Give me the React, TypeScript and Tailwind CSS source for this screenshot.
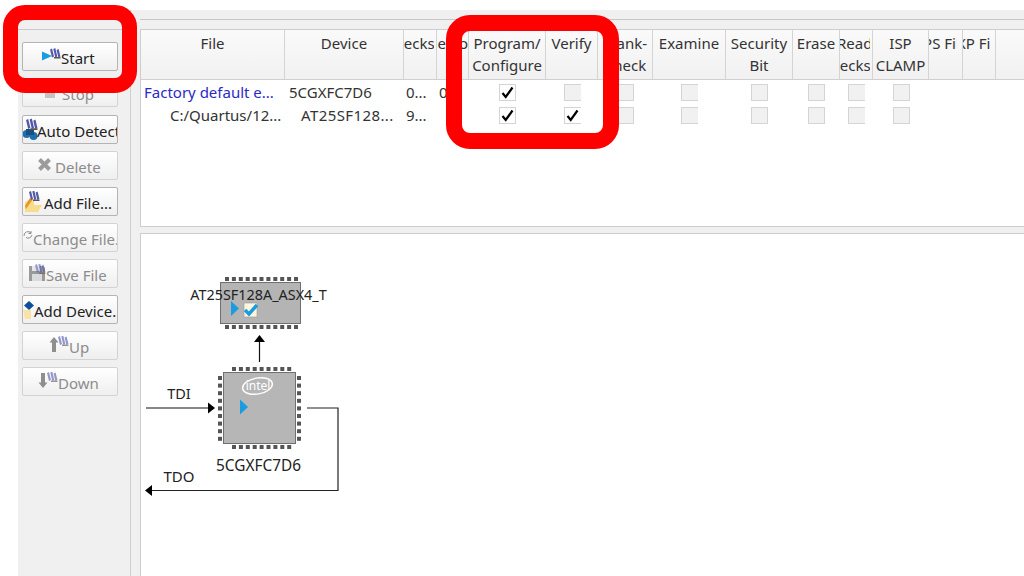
import React from "react";

const Gr = ({ o = 1 }: { o?: number }) => (
  <g opacity={o}>
    <path d="M0 1l2-1 2 8-2 1zM3.300 0.500l2-1 2 8.500-2 1zM6.600 1.500l2-1 1.800 7.500-2 1z" fill="#5458a8" />
    <path d="M4 8.500h6.500v1.500H4z" fill="#555" />
  </g>
);

function Icon({ kind }: { kind: string }) {
  if (kind === "start")
    return (
      <svg width="19" height="18" viewBox="0 0 19 18" className="shrink-0">
        <path d="M0 3.500l10 4.500-10 4.500z" fill="#1c9ce0" />
        <g transform="translate(8 0.500)"><Gr /></g>
      </svg>
    );
  if (kind === "stop")
    return (
      <svg width="18" height="18" viewBox="0 0 18 18" className="shrink-0">
        <path d="M1 6h10v8H1z" fill="#c4c4c4" />
      </svg>
    );
  if (kind === "auto")
    return (
      <svg width="14" height="24" viewBox="0 0 14 24" className="shrink-0 overflow-visible">
        <circle cx="3.500" cy="16" r="4" fill="#1c6fb0" />
        <circle cx="10.500" cy="18" r="4" fill="#1c6fb0" />
        <path d="M3 11h8v6H3z" fill="#1c4f80" />
        <g transform="translate(3 1) scale(1.100)"><Gr /></g>
      </svg>
    );
  if (kind === "delete")
    return (
      <svg width="18" height="16" viewBox="0 0 18 16" className="shrink-0 -mt-[2px]">
        <path d="M2.500 2.500l10 10M12.500 2.500l-10 10" stroke="#9c9c9c" strokeWidth="4" />
      </svg>
    );
  if (kind === "add")
    return (
      <svg width="19" height="22" viewBox="0 0 19 22" className="shrink-0">
        <path d="M0 21V11l6-3 3 2v4h8l-4 7z" fill="#f7dc8c" />
        <path d="M0 15l5-8 3 1-7 10z" fill="#e8952a" />
        <g transform="translate(4 0)"><Gr /></g>
      </svg>
    );
  if (kind === "change")
    return (
      <svg width="10" height="10" viewBox="0 0 10 10" className="shrink-0 -mt-[6px] overflow-visible">
        <path d="M1 6a4 4 0 0 1 7-3M8 1v2.500H5.500M9 5a4 4 0 0 1-6 2.500" stroke="#8a8a8a" fill="none" strokeWidth="1" />
      </svg>
    );
  if (kind === "save")
    return (
      <svg width="17" height="18" viewBox="0 0 17 18" className="shrink-0 -mt-[2px]">
        <path d="M0 2h14l2 2v13H0z" fill="#9a9a9a" />
        <path d="M3 2h8v5H3z" fill="#e6e6e6" />
        <path d="M3 10h10v7H3z" fill="#dadada" />
        <g transform="translate(6 0)"><Gr o={0.55} /></g>
      </svg>
    );
  if (kind === "device")
    return (
      <svg width="11" height="22" viewBox="0 0 11 22" className="shrink-0 overflow-visible">
        <path d="M6 2l5 4.500-5 4.500-5-4.500z" fill="#0f4f9a" />
        <path d="M0 11h8v9H2z" fill="#f8e2a4" />
      </svg>
    );
  if (kind === "up" || kind === "down")
    return (
      <svg width="20" height="18" viewBox="0 0 20 18" className="shrink-0 -mt-[2px]">
        <path d={kind === "up" ? "M5 1l4.500 5.500H7V16H3V6.500H0.500z" : "M3 1h4v9.500h2.500L5 16 0.500 10.500H3z"} fill="#8f8f8f" />
        <g transform="translate(9 0)"><Gr o={0.6} /></g>
      </svg>
    );
  return null;
}

const buttons = [
  { t: "Start", i: "start", on: true, c: "pl-[19px]" },
  { t: "Stop", i: "stop", c: "pl-[21px] mb-[1px]" },
  { t: "Auto Detect", i: "auto", on: true, c: "pl-0" },
  { t: "Delete", i: "delete", c: "pl-[14px]" },
  { t: "Add File...", i: "add", on: true, c: "pl-[2px]" },
  { t: "Change File...", i: "change", c: "pl-0" },
  { t: "Save File", i: "save", c: "pl-[6px]" },
  { t: "Add Device...", i: "device", on: true, c: "pl-0" },
  { t: "Up", i: "up", c: "pl-[26px]" },
  { t: "Down", i: "down", c: "pl-[15px]" },
];

const cols: { w: string; a: string; b?: string; ca?: string; cb?: string; inner?: string }[] = [
  { w: "w-[144px]", a: "File" },
  { w: "w-[119px]", a: "Device" },
  { w: "w-[33px]", a: "Checksum", ca: "ml-[-19px]", inner: "w-[30px] items-start" },
  { w: "w-[32px]", a: "Usercode" },
  { w: "w-[77px]", a: "Program/", b: "Configure" },
  { w: "w-[52px]", a: "Verify" },
  { w: "w-[55px]", a: "Blank-", b: "Check" },
  { w: "w-[73px]", a: "Examine" },
  { w: "w-[67px]", a: "Security", b: "Bit" },
  { w: "w-[47px]", a: "Erase" },
  { w: "w-[33px]", a: "Read", b: "Checksum", ca: "ml-[-3px]", cb: "ml-[-19px]", inner: "w-[30px] items-start" },
  { w: "w-[56px]", a: "ISP", b: "CLAMP" },
  { w: "w-[34px]", a: "IPS File", ca: "ml-[-11px]", inner: "w-[28px] items-start" },
  { w: "w-[33px]", a: "XP File", ca: "ml-[-6px]", inner: "w-[28px] items-start" },
];

function Check({ on, w, cut }: { on?: boolean; w: string; cut?: boolean }) {
  return (
    <div className={`${w} shrink-0 flex justify-center`}>
      <div
        className={`mt-[2px] w-[17px] h-[17px] border border-[#d4d4d4] flex items-center justify-center ${
          on ? "bg-white" : "bg-[#f1f1f1]"
        } ${cut ? "border-r-0" : ""}`}
      >
        {on && (
          <svg width="13" height="13" viewBox="0 0 13 13">
            <path d="M1.500 7l3.200 4L11.500 1.500" stroke="#000" strokeWidth="2.200" fill="none" />
          </svg>
        )}
      </div>
    </div>
  );
}

function Row({ file, fc, device, dc, sum, user, pc, ver }: { file: string; fc: string; device: string; dc: string; sum: string; user: string; pc: boolean; ver: boolean }) {
  return (
    <div className="flex items-center h-[23px] text-[#333] whitespace-nowrap">
      <div className={`w-[144px] shrink-0 ${fc}`}>{file}</div>
      <div className={`w-[119px] shrink-0 ${dc}`}>{device}</div>
      <div className="w-[33px] shrink-0 pl-[2px]">{sum}</div>
      <div className="w-[32px] shrink-0 pl-[2px]">{user}</div>
      <Check on={pc} w="w-[77px]" />
      <Check on={ver} w="w-[52px]" cut />
      <Check w="w-[55px]" />
      <Check w="w-[73px]" cut />
      <Check w="w-[67px]" />
      <Check w="w-[47px]" />
      <Check w="w-[33px]" cut />
      <Check w="w-[56px]" />
    </div>
  );
}

function Diagram() {
  const topPins = Array.from({ length: 11 }, (_, i) => 225 + i * 6.9);
  const chipH = Array.from({ length: 9 }, (_, i) => 232 + i * 6.9);
  const chipV = Array.from({ length: 9 }, (_, i) => 376 + i * 7.6);
  const ff = "'Noto Sans', sans-serif";
  return (
    <svg width="884" height="343" viewBox="141 234 884 343" className="block">
      {topPins.map((x) => (
        <g key={x}>
          <rect x={x} y={277} width="4" height="4" fill="#555" />
          <rect x={x} y={325} width="4" height="4" fill="#555" />
        </g>
      ))}
      <rect x="220.500" y="282.500" width="80" height="41" fill="#b4b4b4" stroke="#6f6f6f" />
      <path d="M231 301l8 7.500-8 7.500z" fill="#1c9ce0" />
      <rect x="244" y="303" width="13" height="14" fill="#fdf6dc" stroke="#999" strokeWidth="0.600" />
      <path d="M245 310l4 4 8-9" stroke="#1c9ce0" strokeWidth="3.400" fill="none" />
      <text x="258.500" y="300" textAnchor="middle" fontSize="14.400" fill="#222" fontFamily={ff}>AT25SF128A_ASX4_T</text>

      <path d="M259.500 362v-22" stroke="#111" strokeWidth="1.200" />
      <path d="M254 342l5.500-7 5.500 7z" fill="#000" />

      {chipH.map((x) => (
        <g key={x}>
          <rect x={x} y={367} width="4" height="4" fill="#555" />
          <rect x={x} y={445} width="4" height="4" fill="#555" />
        </g>
      ))}
      {chipV.map((y) => (
        <g key={y}>
          <rect x={218} y={y} width="4" height="4" fill="#555" />
          <rect x={297} y={y} width="4" height="4" fill="#555" />
        </g>
      ))}
      <rect x="223.500" y="372.500" width="72" height="71" fill="#b6b6b6" stroke="#6f6f6f" />
      <ellipse cx="257.500" cy="386" rx="15" ry="8" fill="none" stroke="#fff" strokeWidth="1.500" transform="rotate(-10 257.500 386)" />
      <text x="258" y="390" textAnchor="middle" fontSize="12" fill="#fff" fontFamily={ff}>intel</text>
      <path d="M240 399.500l8 7.500-8 7.500z" fill="#1c9ce0" />
      <text x="258.500" y="471" textAnchor="middle" fontSize="15.400" fill="#222" fontFamily={ff}>5CGXFC7D6</text>

      <text x="179" y="399" textAnchor="middle" fontSize="14.500" fill="#222" fontFamily={ff}>TDI</text>
      <path d="M146 408h63" stroke="#111" strokeWidth="1.200" />
      <path d="M208 402.500l7 5.500-7 5.500z" fill="#000" />

      <path d="M307 408h31v82.500H150" stroke="#222" strokeWidth="1.200" fill="none" />
      <path d="M152 485l-7 5.500 7 5.500z" fill="#000" />
      <text x="179" y="482" textAnchor="middle" fontSize="15" fill="#222" fontFamily={ff}>TDO</text>
    </svg>
  );
}

export default function App() {
  return (
    <div className="relative w-[1024px] h-[576px] overflow-hidden bg-white font-['Noto_Sans',sans-serif] text-[15px] leading-[22px]">
      <div className="flex h-full pt-[10px] pl-[18px]">
        <div className="w-[113px] shrink-0 bg-[#f0f0f0] border-r border-[#cfcfcf] pt-[19px]">
          <div className="border-t border-[#c9c9c9] pt-[12px] pl-[4px] flex flex-col gap-[7px]">
            {buttons.map((b) => (
              <div
                key={b.t}
                className={`w-[96px] h-[29px] shrink-0 rounded-[2px] border flex items-center overflow-hidden whitespace-nowrap bg-gradient-to-b from-white to-[#efefef] ${b.c} ${
                  b.on ? "border-[#b4b4b4] text-[#222]" : "border-[#d3d3d3] text-[#8c8c8c]"
                }`}
              >
                <Icon kind={b.i} />
                <span className="pt-[2px]">{b.t}</span>
              </div>
            ))}
          </div>
        </div>

        <div className="flex-1 min-w-0 bg-[#f0f0f0] pl-[9px] flex flex-col">
          <div className="h-[10px] border-b border-[#c6c6c6] shrink-0" />
          <div className="h-[9px] shrink-0" />
          <div className="h-[198px] shrink-0 bg-white border border-[#cdcdcd] border-r-0 overflow-hidden">
            <div className="flex h-[50px] border-b border-[#d0d0d0] bg-gradient-to-b from-[#fafafa] to-[#f1f1f1] text-[#333]">
              {cols.map((c) => (
                <div key={c.a} className={`${c.w} shrink-0 border-r border-[#d4d4d4]`}>
                  <div className={`h-full overflow-hidden flex flex-col pt-[2px] ${c.inner ?? "items-center"}`}>
                    <div className={`whitespace-nowrap ${c.ca ?? ""}`}>{c.a}</div>
                    {c.b && <div className={`whitespace-nowrap ${c.cb ?? ""}`}>{c.b}</div>}
                  </div>
                </div>
              ))}
            </div>
            <div>
              <Row file="Factory default e..." fc="pl-[3px] text-[#2a2ac8]" device="5CGXFC7D6" dc="pl-[4px]" sum="0..." user="0..." pc ver={false} />
              <Row file="C:/Quartus/12..." fc="pl-[29px]" device="AT25SF128..." dc="pl-[16px] tracking-[0.4px]" sum="9..." user="" pc ver />
            </div>
          </div>
          <div className="h-[6px] shrink-0" />
          <div className="flex-1 bg-white border border-[#cdcdcd] border-r-0 border-b-0 overflow-hidden">
            <Diagram />
          </div>
        </div>
      </div>

      <div className="absolute left-[3px] top-[5px] w-[134px] h-[88px] border-[15px] border-[#ff0000] rounded-[22px]" />
      <div className="absolute left-[446px] top-[15px] w-[173px] h-[134px] border-[16px] border-[#ff0000] rounded-[24px]" />
    </div>
  );
}
